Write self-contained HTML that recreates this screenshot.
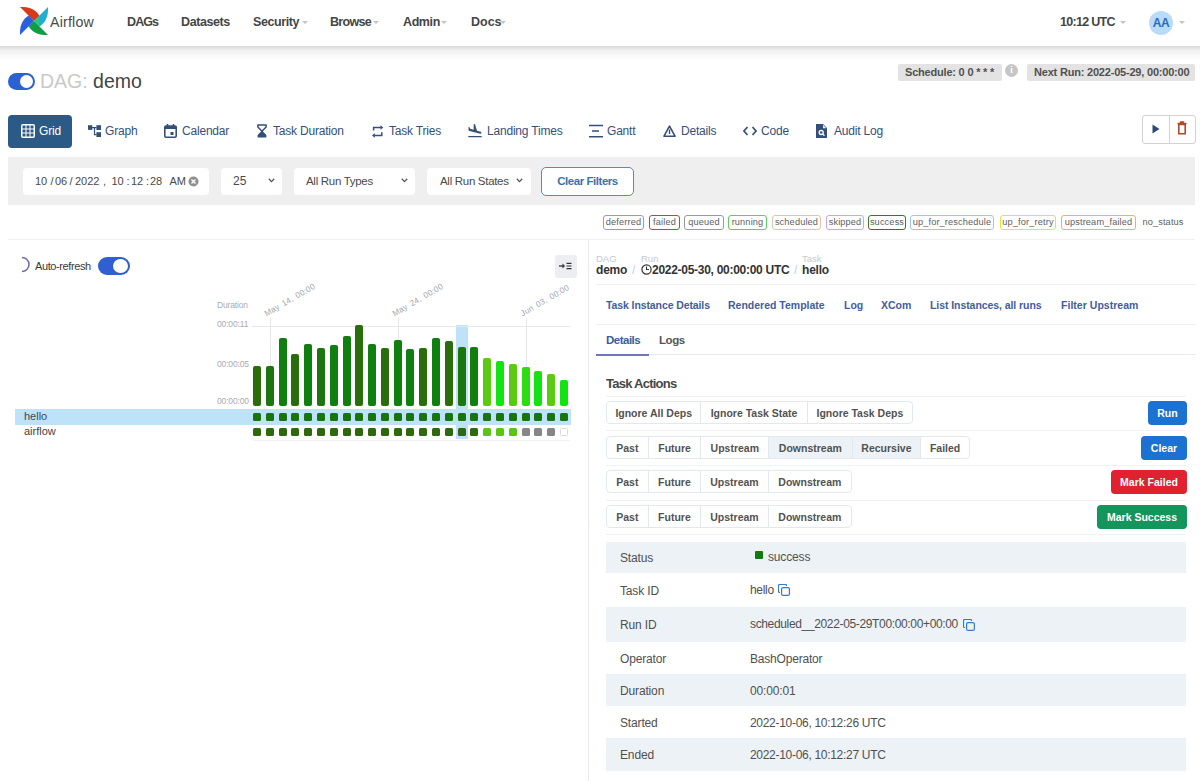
<!DOCTYPE html>
<html><head><meta charset="utf-8">
<style>
*{box-sizing:border-box;margin:0;padding:0}
html,body{width:1200px;height:781px;overflow:hidden;background:#fff}
body{font-family:"Liberation Sans",sans-serif;color:#333;position:relative}
.a{position:absolute;white-space:nowrap}
#nav{position:absolute;left:0;top:0;width:1200px;height:46px;background:#fff;z-index:2}
#shd{position:absolute;left:0;top:46px;width:1200px;height:14px;background:linear-gradient(rgba(0,0,0,.15),rgba(0,0,0,.05) 35%,rgba(0,0,0,0))}
.nv{position:absolute;top:15px;font-size:12.5px;font-weight:bold;color:#454545;line-height:15px;white-space:nowrap;letter-spacing:-0.4px}
.caret{position:absolute;width:0;height:0;border-left:3px solid transparent;border-right:3px solid transparent;border-top:3px solid #c4c4c4}
.lbl{position:absolute;background:#e3e3e3;color:#505050;font-weight:bold;font-size:11px;height:17px;line-height:17px;padding:0 0 0 7px;border-radius:2px;white-space:nowrap;letter-spacing:-0.2px}
.tab{position:absolute;top:124px;font-size:12px;line-height:14px;color:#34507a;white-space:nowrap;letter-spacing:-0.2px}
.ico{position:absolute}
.inp{position:absolute;top:168px;height:27px;background:#fff;border-radius:4px;font-size:12px;color:#4a4a4a;line-height:27px;white-space:nowrap}
.chev{position:absolute;top:11px;width:5px;height:5px;border-right:1.5px solid #555;border-bottom:1.5px solid #555;transform:rotate(45deg)}
.bd{position:absolute;top:215px;height:15px;border:1px solid;border-radius:3px;font-size:9.2px;line-height:13px;color:#606060;letter-spacing:0.15px;text-align:center;white-space:nowrap}
.bar{position:absolute;width:8px;border-radius:2px}
.sq{position:absolute;width:8px;height:8px;border-radius:1.5px}
.ax{position:absolute;font-size:8.5px;color:#a9acb3;white-space:nowrap;line-height:10px;letter-spacing:-0.15px}
.lnk{position:absolute;top:299px;font-size:10.5px;font-weight:bold;color:#3f5ea0;white-space:nowrap;line-height:12px}
.grp{position:absolute;height:23px;border:1px solid #e2e8f0;border-radius:4px;overflow:hidden;display:flex}
.grp div{height:21px;line-height:23px;font-size:10.5px;font-weight:bold;color:#525252;text-align:center;border-left:1px solid #e2e8f0}
.grp div:first-child{border-left:none}
.grp div.on{background:#edf2f7}
.hr{position:absolute;left:606px;width:580px;height:1px;background:#eef1f5}
.btn{position:absolute;height:24px;border-radius:4px;color:#fff;font-size:10.5px;font-weight:bold;text-align:center;line-height:24px;white-space:nowrap}
.tr{position:absolute;left:606px;width:580px;font-size:12px;color:#505050;white-space:nowrap}
.tr span{position:absolute;top:0;letter-spacing:-0.15px}
</style></head><body>
<div id="nav">
  <svg class="ico" style="left:20px;top:6.5px" width="28" height="28" viewBox="0 0 28 28">
    <path d="M0 0L14 14L19.5 9C16 2 8 -0.5 0 0Z" fill="#d8391b"/>
    <path d="M28 0L14 14L19 19.5C26 16 28.5 8 28 0Z" fill="#22aed0"/>
    <path d="M28 28L14 14L8.5 19C12 26 20 28.5 28 28Z" fill="#0f9d45"/>
    <path d="M0 28L14 14L9 8.5C2 12 -0.5 20 0 28Z" fill="#2b5fe0"/>
    <path d="M14 14L19.5 9L19 19.5Z" fill="#2fd070" opacity="0.7"/>
  </svg>
  <div class="nv" style="left:50px;font-weight:normal;font-size:14.2px;color:#4a4a4a;top:14.5px;letter-spacing:0.2px">Airflow</div>
  <div class="nv" style="left:127px;letter-spacing:-0.9px">DAGs</div>
  <div class="nv" style="left:181px">Datasets</div>
  <div class="nv" style="left:253px">Security</div><span class="caret" style="left:302px;top:21px"></span>
  <div class="nv" style="left:330px;letter-spacing:-0.7px">Browse</div><span class="caret" style="left:373px;top:21px"></span>
  <div class="nv" style="left:403px">Admin</div><span class="caret" style="left:441px;top:21px"></span>
  <div class="nv" style="left:471px;letter-spacing:0px">Docs</div><span class="caret" style="left:500px;top:21px"></span>
  <div class="nv" style="left:1060px;letter-spacing:-0.7px">10:12 UTC</div><span class="caret" style="left:1120px;top:21px"></span>
  <div class="a" style="left:1149px;top:11px;width:24px;height:24px;border-radius:50%;background:#b8dcf8;color:#2f68b8;font-weight:bold;font-size:12px;line-height:24px;text-align:center;letter-spacing:-0.3px">AA</div>
  <span class="caret" style="left:1179px;top:21px"></span>
</div>

<div id="shd"></div>
<!-- DAG title -->
<div class="a" style="left:8px;top:73px;width:27px;height:17px;border-radius:9px;background:#2a62d4"></div>
<div class="a" style="left:20px;top:75px;width:13px;height:13px;border-radius:50%;background:#fff"></div>
<div class="a" style="left:40px;top:70px;font-size:19.5px;line-height:22px;letter-spacing:0px"><span style="color:#c9c9c9">DAG:</span> <span style="color:#444">demo</span></div>

<div class="lbl" style="left:898px;top:64px;width:104px">Schedule: 0 0 * * *</div>
<div class="a" style="left:1005px;top:64px;width:13px;height:13px;border-radius:50%;background:#c6c6c6;color:#fff;font-size:9px;font-weight:bold;text-align:center;line-height:13px">i</div>
<div class="lbl" style="left:1027px;top:64px;width:168px">Next Run: 2022-05-29, 00:00:00</div>

<!-- tabs -->
<div class="a" style="left:8px;top:115px;width:64px;height:33px;background:#2c5a86;border-radius:4px"></div>
<svg class="ico" style="left:21px;top:124px" width="14" height="14" viewBox="0 0 14 14"><rect x="0" y="0" width="14" height="14" rx="2" fill="#fff"/><path d="M1.5 1.5h3v3h-3zM5.5 1.5h3v3h-3zM9.5 1.5h3v3h-3zM1.5 5.5h3v3h-3zM5.5 5.5h3v3h-3zM9.5 5.5h3v3h-3zM1.5 9.5h3v3h-3zM5.5 9.5h3v3h-3zM9.5 9.5h3v3h-3z" fill="#2c5a86"/></svg>
<div class="tab" style="left:39px;color:#fff">Grid</div>

<svg class="ico" style="left:88px;top:125px" width="13" height="12" viewBox="0 0 13 12"><rect x="0" y="0.2" width="4.3" height="4.7" fill="#34507a"/><rect x="8.4" y="0.2" width="4.6" height="4.8" fill="#34507a"/><rect x="8.4" y="7.2" width="4.6" height="4.8" fill="#34507a"/><path d="M4 2.6h4.5M6.5 2.6v7h2" stroke="#34507a" stroke-width="1.2" fill="none"/></svg>
<div class="tab" style="left:105px">Graph</div>

<svg class="ico" style="left:164px;top:124px" width="13" height="14" viewBox="0 0 13 14"><rect x="0.8" y="2" width="11.4" height="11.2" rx="1.2" fill="none" stroke="#34507a" stroke-width="1.6"/><rect x="0.8" y="2" width="11.4" height="3" fill="#34507a"/><path d="M3.5 0v3M9.5 0v3" stroke="#34507a" stroke-width="1.5"/><rect x="6.5" y="8" width="3" height="3" fill="#34507a"/></svg>
<div class="tab" style="left:182px">Calendar</div>

<svg class="ico" style="left:257px;top:124px" width="10" height="14" viewBox="0 0 10 14"><path d="M0.9 1H9.1V3L5 7.2L0.9 3Z" stroke="#34507a" stroke-width="1.5" fill="none" stroke-linejoin="round"/><path d="M5 6.6L9.4 11V13.5H0.6V11Z" fill="#34507a"/></svg>
<div class="tab" style="left:273px">Task Duration</div>

<svg class="ico" style="left:371px;top:124px" width="14" height="14" viewBox="0 0 14 14"><path d="M2.6 6.6V3.5H10" stroke="#34507a" stroke-width="1.5" fill="none"/><path d="M9.5 1.2L12.3 3.5L9.5 5.8Z" fill="#34507a"/><path d="M10.8 8.3V11.4H3.5" stroke="#34507a" stroke-width="1.5" fill="none"/><path d="M3.8 9.1L1 11.4L3.8 13.7Z" fill="#34507a"/></svg>
<div class="tab" style="left:389px">Task Tries</div>

<svg class="ico" style="left:468px;top:124px" width="14" height="14" viewBox="2 2 20 20"><path d="M2.5 19h19v2h-19v-2zm7.18-5.73l4.35 1.16 5.31 1.42c.8.21 1.62-.26 1.84-1.06.21-.8-.26-1.62-1.06-1.84l-5.31-1.42-2.76-9.02L10.12 2v8.28L5.15 8.95l-.93-2.32-1.45-.39v5.17l1.6.43 5.31 1.43z" fill="#34507a"/></svg>
<div class="tab" style="left:487px">Landing Times</div>

<svg class="ico" style="left:589px;top:124px" width="14" height="14" viewBox="0 0 14 14"><path d="M0 1.5h14M3 7h7M0 12.8h14" stroke="#34507a" stroke-width="1.6"/></svg>
<div class="tab" style="left:607px">Gantt</div>

<svg class="ico" style="left:663px;top:125px" width="13" height="12" viewBox="0 0 13 12"><path d="M6.5 1.2L12 11.2H1Z" fill="none" stroke="#34507a" stroke-width="1.6" stroke-linejoin="round"/><path d="M6.5 4.5v4.5" stroke="#34507a" stroke-width="1.4"/></svg>
<div class="tab" style="left:681px">Details</div>

<svg class="ico" style="left:743px;top:126px" width="14" height="10" viewBox="0 0 14 10"><path d="M4.5 1L1 5l3.5 4M9.5 1L13 5l-3.5 4" stroke="#34507a" stroke-width="1.7" fill="none"/></svg>
<div class="tab" style="left:761px">Code</div>

<svg class="ico" style="left:816px;top:124px" width="11" height="14" viewBox="0 0 11 14"><path d="M0 0h7l4 4v10h-11z" fill="#34507a"/><path d="M7 0.8v3.4h3.4z" fill="#e8eef8"/><circle cx="5.2" cy="8.5" r="2" fill="none" stroke="#fff" stroke-width="1.3"/><path d="M6.6 9.9l1.8 1.8" stroke="#fff" stroke-width="1.3"/></svg>
<div class="tab" style="left:834px">Audit Log</div>

<div class="a" style="left:1142px;top:115px;width:54px;height:29px;border:1px solid #d2d2d2;border-radius:3px"></div>
<div class="a" style="left:1169px;top:116px;width:1px;height:27px;background:#d2d2d2"></div>
<svg class="ico" style="left:1152px;top:124px" width="8" height="10" viewBox="0 0 8 10"><path d="M0.5 0.5L7.5 5L0.5 9.5Z" fill="#2c4a78"/></svg>
<svg class="ico" style="left:1177px;top:121px" width="10" height="14" viewBox="0 0 10 14"><path d="M0.5 2.5h9M3.5 2.5V1h3v1.5" stroke="#b24a2a" stroke-width="1.3" fill="none"/><path d="M1.8 3.5h6.4v9.2h-6.4z" fill="none" stroke="#b24a2a" stroke-width="1.6"/></svg>

<!-- filter bar -->
<div class="a" style="left:8px;top:157px;width:1187px;height:48px;background:#efefef"></div>
<div class="inp" style="left:23px;width:186px"></div>
<div class="a" style="left:35px;top:175px;font-size:11px;line-height:12px;color:#4a4a4a">10</div><div class="a" style="left:50.5px;top:175px;font-size:11px;line-height:12px;color:#4a4a4a">/</div><div class="a" style="left:55px;top:175px;font-size:11px;line-height:12px;color:#4a4a4a">06</div><div class="a" style="left:69.5px;top:175px;font-size:11px;line-height:12px;color:#4a4a4a">/</div><div class="a" style="left:75px;top:175px;font-size:11px;line-height:12px;color:#4a4a4a">2022</div><div class="a" style="left:103px;top:175px;font-size:11px;line-height:12px;color:#4a4a4a">,</div><div class="a" style="left:111.5px;top:175px;font-size:11px;line-height:12px;color:#4a4a4a">10</div><div class="a" style="left:126.5px;top:175px;font-size:11px;line-height:12px;color:#4a4a4a">:</div><div class="a" style="left:131px;top:175px;font-size:11px;line-height:12px;color:#4a4a4a">12</div><div class="a" style="left:146px;top:175px;font-size:11px;line-height:12px;color:#4a4a4a">:</div><div class="a" style="left:150px;top:175px;font-size:11px;line-height:12px;color:#4a4a4a">28</div><div class="a" style="left:169.5px;top:175px;font-size:11px;line-height:12px;color:#4a4a4a">AM</div>
<svg class="ico" style="left:188px;top:176px" width="11" height="11" viewBox="0 0 11 11"><circle cx="5.5" cy="5.5" r="5" fill="#8f8f8f"/><path d="M3.5 3.5l4 4M7.5 3.5l-4 4" stroke="#fff" stroke-width="1.4"/></svg>
<div class="inp" style="left:221px;width:61px;padding-left:12px;font-size:12px">25</div><svg class="ico" style="left:268px;top:178px" width="7" height="5" viewBox="0 0 7 5"><path d="M0.8 0.8L3.5 3.6L6.2 0.8" stroke="#555" stroke-width="1.25" fill="none"/></svg>
<div class="inp" style="left:294px;width:121px;padding-left:12px;letter-spacing:-0.3px;font-size:11.5px">All Run Types</div><svg class="ico" style="left:401px;top:178px" width="7" height="5" viewBox="0 0 7 5"><path d="M0.8 0.8L3.5 3.6L6.2 0.8" stroke="#555" stroke-width="1.25" fill="none"/></svg>
<div class="inp" style="left:427px;width:104px;padding-left:13px;letter-spacing:-0.3px;font-size:11.5px">All Run States</div><svg class="ico" style="left:516px;top:178px" width="7" height="5" viewBox="0 0 7 5"><path d="M0.8 0.8L3.5 3.6L6.2 0.8" stroke="#555" stroke-width="1.25" fill="none"/></svg>
<div class="a" style="left:541px;top:167px;width:93px;height:29px;border:1.2px solid #5f86bf;border-radius:5px;background:#fff;color:#3a72ad;font-weight:bold;font-size:11.5px;line-height:27px;text-align:center;letter-spacing:-0.45px">Clear Filters</div>

<!-- legend -->
<div class="bd" style="left:603px;width:41px;border-color:#9f8fdc">deferred</div>
<div class="bd" style="left:649px;width:31px;border-color:#a8503f">failed</div>
<div class="bd" style="left:684px;width:40px;border-color:#9a9a9a">queued</div>
<div class="bd" style="left:728px;width:39px;border-color:#5ccf5c">running</div>
<div class="bd" style="left:772px;width:49px;border-color:#d8c8a8">scheduled</div>
<div class="bd" style="left:826px;width:38px;border-color:#e0a0d0">skipped</div>
<div class="bd" style="left:868px;width:38px;border-color:#2f7a2f">success</div>
<div class="bd" style="left:910px;width:84px;border-color:#9cc8e8">up_for_reschedule</div>
<div class="bd" style="left:1000px;width:56px;border-color:#e8e040">up_for_retry</div>
<div class="bd" style="left:1061px;width:75px;border-color:#dcc040">upstream_failed</div>
<div class="bd" style="left:1139px;width:48px;border-color:transparent">no_status</div>

<!-- left panel -->
<div class="a" style="left:8px;top:239px;width:1187px;height:1px;background:#eef0f3"></div>
<svg class="ico" style="left:19px;top:256px" width="14" height="17" viewBox="0 0 14 17"><path d="M3 1.5A7 7 0 0 1 3 15.5" stroke="#7a6aa8" stroke-width="1.6" fill="none"/></svg>
<div class="a" style="left:35px;top:260px;font-size:11px;line-height:12px;color:#3a3a3a;letter-spacing:-0.4px">Auto-refresh</div>
<div class="a" style="left:98px;top:257px;width:32px;height:18px;border-radius:9px;background:#2f5fd0"></div>
<div class="a" style="left:113px;top:259px;width:15px;height:14px;border-radius:50%;background:#fff"></div>

<div class="a" style="left:555px;top:255px;width:22px;height:23px;border-radius:3px;background:#eceef2"></div>
<svg class="ico" style="left:559px;top:262px" width="14" height="8" viewBox="0 0 14 8"><path d="M0 4h4" stroke="#333" stroke-width="1.3"/><path d="M3.5 1.5L6 4L3.5 6.5Z" fill="#333"/><path d="M7.5 1.3h5M7.5 4h5M7.5 6.7h5" stroke="#333" stroke-width="1.2"/></svg>

<div class="a" style="left:15px;top:409px;width:556px;height:16px;background:#bee3f8"></div>
<div class="a" style="left:253px;top:440px;width:317px;height:1px;background:#f0f2f4"></div>
<div class="a" style="left:24px;top:410px;font-size:11px;line-height:13px;color:#3a4a55">hello</div>
<div class="a" style="left:24px;top:425px;font-size:11px;line-height:13px;color:#444">airflow</div>

<div class="a" style="left:456px;top:325px;width:12px;height:114px;background:#bee3f8"></div>
<div class="a" style="left:252px;top:326px;width:318px;height:1px;background:#e6e8ec"></div>
<div class="a" style="left:270px;top:318px;width:1px;height:88px;background:#e6e8ec"></div>
<div class="a" style="left:398px;top:318px;width:1px;height:88px;background:#e6e8ec"></div>
<div class="a" style="left:526px;top:318px;width:1px;height:88px;background:#e6e8ec"></div>
<div class="ax" style="left:217px;top:300px">Duration</div>
<div class="ax" style="left:217px;top:319px">00:00:11</div>
<div class="ax" style="left:217px;top:359px">00:00:05</div>
<div class="ax" style="left:217px;top:395.7px">00:00:00</div>
<div class="ax" style="left:268px;top:309px;transform:rotate(-30deg);transform-origin:0 100%;letter-spacing:0.15px;word-spacing:1.5px;color:#a3a7b0;font-size:8.2px">May 14, 00:00</div>
<div class="ax" style="left:396px;top:309px;transform:rotate(-30deg);transform-origin:0 100%;letter-spacing:0.15px;word-spacing:1.5px;color:#a3a7b0;font-size:8.2px">May 24, 00:00</div>
<div class="ax" style="left:524px;top:309px;transform:rotate(-30deg);transform-origin:0 100%;letter-spacing:0.15px;word-spacing:1.5px;color:#a3a7b0;font-size:8.2px">Jun 03, 00:00</div>
<div class="bar" style="left:253px;top:366px;height:40px;background:#2a6e0c"></div>
<div class="sq" style="left:253px;top:413px;background:#187312"></div>
<div class="sq" style="left:253px;top:428px;background:#2c6a0c"></div>
<div class="bar" style="left:266px;top:366px;height:40px;background:#1c7610"></div>
<div class="sq" style="left:266px;top:413px;background:#187312"></div>
<div class="sq" style="left:266px;top:428px;background:#2c6a0c"></div>
<div class="bar" style="left:279px;top:338px;height:68px;background:#0f7f0f"></div>
<div class="sq" style="left:279px;top:413px;background:#187312"></div>
<div class="sq" style="left:279px;top:428px;background:#2c6a0c"></div>
<div class="bar" style="left:291px;top:354px;height:52px;background:#2a6e0c"></div>
<div class="sq" style="left:291px;top:413px;background:#187312"></div>
<div class="sq" style="left:291px;top:428px;background:#2c6a0c"></div>
<div class="bar" style="left:304px;top:344px;height:62px;background:#0f7f0f"></div>
<div class="sq" style="left:304px;top:413px;background:#187312"></div>
<div class="sq" style="left:304px;top:428px;background:#2c6a0c"></div>
<div class="bar" style="left:317px;top:348px;height:58px;background:#1c7610"></div>
<div class="sq" style="left:317px;top:413px;background:#187312"></div>
<div class="sq" style="left:317px;top:428px;background:#2c6a0c"></div>
<div class="bar" style="left:330px;top:345px;height:61px;background:#0f7f0f"></div>
<div class="sq" style="left:330px;top:413px;background:#187312"></div>
<div class="sq" style="left:330px;top:428px;background:#2c6a0c"></div>
<div class="bar" style="left:343px;top:336px;height:70px;background:#0f7f0f"></div>
<div class="sq" style="left:343px;top:413px;background:#187312"></div>
<div class="sq" style="left:343px;top:428px;background:#2c6a0c"></div>
<div class="bar" style="left:355px;top:325px;height:81px;background:#2a6e0c"></div>
<div class="sq" style="left:355px;top:413px;background:#187312"></div>
<div class="sq" style="left:355px;top:428px;background:#2c6a0c"></div>
<div class="bar" style="left:368px;top:344px;height:62px;background:#0f7f0f"></div>
<div class="sq" style="left:368px;top:413px;background:#187312"></div>
<div class="sq" style="left:368px;top:428px;background:#2c6a0c"></div>
<div class="bar" style="left:381px;top:348px;height:58px;background:#2a6e0c"></div>
<div class="sq" style="left:381px;top:413px;background:#187312"></div>
<div class="sq" style="left:381px;top:428px;background:#2c6a0c"></div>
<div class="bar" style="left:394px;top:340px;height:66px;background:#0f7f0f"></div>
<div class="sq" style="left:394px;top:413px;background:#187312"></div>
<div class="sq" style="left:394px;top:428px;background:#2c6a0c"></div>
<div class="bar" style="left:406px;top:349px;height:57px;background:#0f7f0f"></div>
<div class="sq" style="left:406px;top:413px;background:#187312"></div>
<div class="sq" style="left:406px;top:428px;background:#2c6a0c"></div>
<div class="bar" style="left:419px;top:348px;height:58px;background:#2a6e0c"></div>
<div class="sq" style="left:419px;top:413px;background:#187312"></div>
<div class="sq" style="left:419px;top:428px;background:#2c6a0c"></div>
<div class="bar" style="left:432px;top:338px;height:68px;background:#0f7f0f"></div>
<div class="sq" style="left:432px;top:413px;background:#187312"></div>
<div class="sq" style="left:432px;top:428px;background:#2c6a0c"></div>
<div class="bar" style="left:445px;top:341px;height:65px;background:#2a6e0c"></div>
<div class="sq" style="left:445px;top:413px;background:#187312"></div>
<div class="sq" style="left:445px;top:428px;background:#2c6a0c"></div>
<div class="bar" style="left:458px;top:347px;height:59px;background:#1c7610"></div>
<div class="sq" style="left:458px;top:413px;background:#187312"></div>
<div class="sq" style="left:458px;top:428px;background:#2c6a0c"></div>
<div class="bar" style="left:470px;top:347px;height:59px;background:#0f7f0f"></div>
<div class="sq" style="left:470px;top:413px;background:#187312"></div>
<div class="sq" style="left:470px;top:428px;background:#2c6a0c"></div>
<div class="bar" style="left:483px;top:358px;height:48px;background:#5acb12"></div>
<div class="sq" style="left:483px;top:413px;background:#187312"></div>
<div class="sq" style="left:483px;top:428px;background:#5cc414"></div>
<div class="bar" style="left:496px;top:361px;height:45px;background:#12e412"></div>
<div class="sq" style="left:496px;top:413px;background:#187312"></div>
<div class="sq" style="left:496px;top:428px;background:#5cc414"></div>
<div class="bar" style="left:509px;top:364px;height:42px;background:#5acb12"></div>
<div class="sq" style="left:509px;top:413px;background:#187312"></div>
<div class="sq" style="left:509px;top:428px;background:#5cc414"></div>
<div class="bar" style="left:522px;top:367px;height:39px;background:#2edc12"></div>
<div class="sq" style="left:522px;top:413px;background:#187312"></div>
<div class="sq" style="left:522px;top:428px;background:#868686"></div>
<div class="bar" style="left:534px;top:371px;height:35px;background:#14e214"></div>
<div class="sq" style="left:534px;top:413px;background:#187312"></div>
<div class="sq" style="left:534px;top:428px;background:#868686"></div>
<div class="bar" style="left:547px;top:374px;height:32px;background:#5acb12"></div>
<div class="sq" style="left:547px;top:413px;background:#187312"></div>
<div class="sq" style="left:547px;top:428px;background:#868686"></div>
<div class="bar" style="left:560px;top:380px;height:26px;background:#12e412"></div>
<div class="sq" style="left:560px;top:413px;background:#187312"></div>
<div class="sq" style="left:560px;top:428px;background:#fff;border:1px solid #ddd"></div><!-- right panel -->
<div class="a" style="left:588px;top:240px;width:1px;height:541px;background:#e6e9ee"></div>
<div class="a" style="left:596px;top:254px;font-size:9.5px;line-height:10px;color:#c3cad4">DAG</div>
<div class="a" style="left:641px;top:254px;font-size:9.5px;line-height:10px;color:#c3cad4">Run</div>
<div class="a" style="left:802px;top:254px;font-size:9.5px;line-height:10px;color:#c3cad4">Task</div>
<div class="a" style="left:596px;top:264px;font-size:12px;line-height:13px;font-weight:bold;color:#333;letter-spacing:-0.2px">demo</div>
<div class="a" style="left:632px;top:264px;font-size:12px;line-height:13px;color:#c8cdd4">/</div>
<svg class="ico" style="left:641px;top:264px" width="11" height="11" viewBox="0 0 11 11"><circle cx="5.5" cy="5.5" r="4.6" fill="none" stroke="#333" stroke-width="1.2"/><path d="M5.5 2.5v3h2.5" stroke="#333" stroke-width="1.1" fill="none"/></svg>
<div class="a" style="left:652px;top:264px;font-size:12px;line-height:13px;font-weight:bold;color:#333;letter-spacing:-0.28px">2022-05-30, 00:00:00 UTC</div>
<div class="a" style="left:794px;top:264px;font-size:12px;line-height:13px;color:#c8cdd4">/</div>
<div class="a" style="left:802px;top:264px;font-size:12px;line-height:13px;font-weight:bold;color:#333;letter-spacing:-0.2px">hello</div>
<div class="a" style="left:596px;top:284px;width:600px;height:1px;background:#eef1f5"></div>

<div class="lnk" style="left:606px;letter-spacing:-0.1px">Task Instance Details</div>
<div class="lnk" style="left:728px;letter-spacing:0px">Rendered Template</div>
<div class="lnk" style="left:844px">Log</div>
<div class="lnk" style="left:881px">XCom</div>
<div class="lnk" style="left:930px;letter-spacing:-0.07px">List Instances, all runs</div>
<div class="lnk" style="left:1061px;letter-spacing:0.03px">Filter Upstream</div>
<div class="a" style="left:596px;top:324px;width:600px;height:1px;background:#eef1f5"></div>

<div class="a" style="left:606px;top:334px;font-size:11.5px;line-height:12px;font-weight:bold;color:#34609e;letter-spacing:-0.5px">Details</div>
<div class="a" style="left:659px;top:334px;font-size:11.5px;line-height:12px;font-weight:bold;color:#555;letter-spacing:-0.4px">Logs</div>
<div class="a" style="left:596px;top:354px;width:600px;height:1px;background:#e6e9ee"></div>
<div class="a" style="left:596px;top:354px;width:53px;height:2px;background:#7077b5"></div>

<div class="a" style="left:606px;top:377px;font-size:13px;line-height:13px;font-weight:bold;color:#474747;letter-spacing:-0.75px">Task Actions</div>
<div class="hr" style="top:396px"></div>
<div class="grp" style="left:606px;top:401px;width:307px"><div style="width:94px">Ignore All Deps</div><div style="width:107px">Ignore Task State</div><div style="width:106px">Ignore Task Deps</div></div>
<div class="btn" style="left:1148px;top:401px;width:39px;background:#1b72d0">Run</div>
<div class="hr" style="top:430px"></div>
<div class="grp" style="left:606px;top:436px;width:364px"><div style="width:41px">Past</div><div style="width:53px">Future</div><div style="width:68px">Upstream</div><div class="on" style="width:84px">Downstream</div><div class="on" style="width:69px">Recursive</div><div style="width:49px">Failed</div></div>
<div class="btn" style="left:1141px;top:436px;width:46px;background:#1b72d0">Clear</div>
<div class="hr" style="top:465px"></div>
<div class="grp" style="left:606px;top:470px;width:246px"><div style="width:41px">Past</div><div style="width:53px">Future</div><div style="width:68px">Upstream</div><div style="width:84px">Downstream</div></div>
<div class="btn" style="left:1111px;top:470px;width:76px;background:#e0212f">Mark Failed</div>
<div class="hr" style="top:500px"></div>
<div class="grp" style="left:606px;top:505px;width:246px"><div style="width:41px">Past</div><div style="width:53px">Future</div><div style="width:68px">Upstream</div><div style="width:84px">Downstream</div></div>
<div class="btn" style="left:1097px;top:505px;width:90px;background:#14955c">Mark Success</div>
<div class="hr" style="top:534px"></div>

<div class="tr" style="top:542px;height:31px;background:#edf2f7"><span style="left:14px;top:9px">Status</span><span style="left:149px;top:9px;width:8px;height:8px;background:#117a11;border-radius:1px"></span><span style="left:162px;top:8px">success</span></div>
<div class="tr" style="top:573px;height:34px"><span style="left:14px;top:11px">Task ID</span><span style="left:144px;top:10px;letter-spacing:-0.3px">hello</span></div>
<div class="tr" style="top:607px;height:35px;background:#edf2f7"><span style="left:14px;top:11px">Run ID</span><span style="left:144px;top:10px;letter-spacing:-0.35px">scheduled__2022-05-29T00:00:00+00:00</span></div>
<div class="tr" style="top:642px;height:32px"><span style="left:14px;top:10px">Operator</span><span style="left:144px;top:10px;letter-spacing:-0.2px">BashOperator</span></div>
<div class="tr" style="top:674px;height:32px;background:#edf2f7"><span style="left:14px;top:10px">Duration</span><span style="left:144px;top:10px">00:00:01</span></div>
<div class="tr" style="top:706px;height:32px"><span style="left:14px;top:10px">Started</span><span style="left:144px;top:10px;letter-spacing:-0.3px">2022-10-06, 10:12:26 UTC</span></div>
<div class="tr" style="top:738px;height:33px;background:#edf2f7"><span style="left:14px;top:10px">Ended</span><span style="left:144px;top:10px;letter-spacing:-0.3px">2022-10-06, 10:12:27 UTC</span></div>
<svg class="ico" style="left:778px;top:584px" width="12" height="12" viewBox="0 0 12 12"><path d="M2 8.5H1.5a1 1 0 0 1-1-1V1.5a1 1 0 0 1 1-1h6a1 1 0 0 1 1 1V2" stroke="#3a78c8" stroke-width="1.2" fill="none"/><rect x="3.6" y="3.6" width="7.8" height="7.8" rx="1.5" stroke="#3a78c8" stroke-width="1.2" fill="none"/></svg>
<svg class="ico" style="left:963px;top:619px" width="12" height="12" viewBox="0 0 12 12"><path d="M2 8.5H1.5a1 1 0 0 1-1-1V1.5a1 1 0 0 1 1-1h6a1 1 0 0 1 1 1V2" stroke="#3a78c8" stroke-width="1.2" fill="none"/><rect x="3.6" y="3.6" width="7.8" height="7.8" rx="1.5" stroke="#3a78c8" stroke-width="1.2" fill="none"/></svg>
</body></html>
